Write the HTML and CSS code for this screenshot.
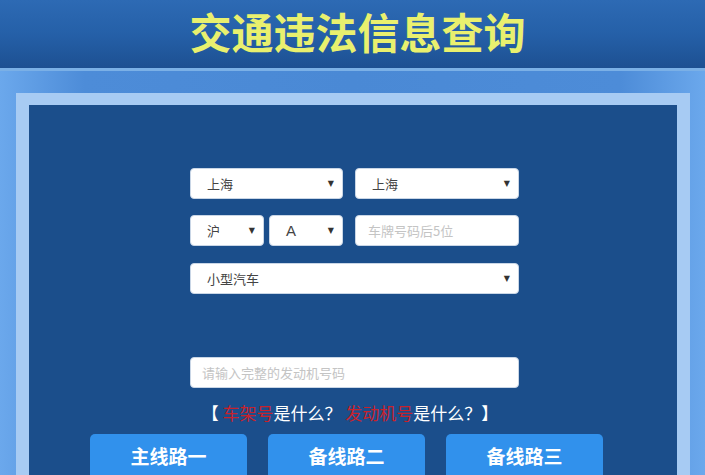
FILE: index.html
```html
<!DOCTYPE html>
<html lang="zh-CN">
<head>
<meta charset="utf-8">
<title>交通违法信息查询</title>
<link rel="stylesheet" href="styles.css">
</head>
<body>
<header class="top">
  <h1 class="title">交通违法信息查询</h1>
</header>
<div class="band">
  <div class="frame">
    <div class="panel">
      <div class="form">
        <div class="row">
          <div class="sel w153"><span>上海</span><i class="arr">▼</i></div>
          <div class="sel w164"><span>上海</span><i class="arr">▼</i></div>
        </div>
        <div class="row">
          <div class="pair">
            <div class="sel w74"><span>沪</span><i class="arr">▼</i></div>
            <div class="sel w74"><span class="latin">A</span><i class="arr">▼</i></div>
          </div>
          <div class="sel w164"><span class="ph">车牌号码后5位</span></div>
        </div>
        <div class="row">
          <div class="sel wfull"><span>小型汽车</span><i class="arr">▼</i></div>
        </div>
        <div class="row engine">
          <div class="sel wfull"><span class="ph ph2">请输入完整的发动机号码</span></div>
        </div>
      </div>
      <p class="hint">【 <span class="red">车架号</span>是什么？ <span class="red">发动机号</span>是什么？】</p>
      <div class="btns">
        <div class="btn">主线路一</div>
        <div class="btn">备线路二</div>
        <div class="btn">备线路三</div>
      </div>
    </div>
  </div>
</div>
</body>
</html>
```

FILE: styles.css
```css
html, body {
  margin: 0;
  padding: 0;
  height: 100%;
  overflow: hidden;
}
body {
  font-family: "Noto Sans CJK SC", "Noto Sans", sans-serif;
  background: #4a8bd6;
}
.top {
  height: 68px;
  background: linear-gradient(to bottom, #2d6ab4 0%, #2560a8 50%, #1d5092 100%);
  border-bottom: 3px solid #7bb0e6;
  display: flex;
  justify-content: center;
  align-items: center;
}
.title {
  margin: 0;
  font-size: 42px;
  font-weight: 700;
  color: #e9f06e;
  line-height: 1;
  margin-top: -6px;
  margin-left: 10px;
}
.band {
  height: 404px;
  background: linear-gradient(to right, #6ba8ec 0%, #4d8cd8 12%, #4a89d5 50%, #4d8cd8 88%, #6ba8ec 100%);
  padding: 22px 15px 0 16px;
  box-sizing: border-box;
}
.frame {
  border-style: solid;
  border-color: #a7cbf3;
  border-width: 12px 13px 0 13px;
  height: 370px;
}
.panel {
  background: #1b4e8b;
  height: 100%;
  padding-top: 63px;
  box-sizing: border-box;
  overflow: hidden;
}
.form {
  width: 329px;
  margin-left: 161px;
  display: flex;
  flex-direction: column;
  gap: 16px;
}
.row {
  display: flex;
  justify-content: space-between;
  height: 31px;
}
.row:nth-child(3) {
  margin-top: 1px;
}
.row.engine {
  margin-top: 47px;
}
.pair {
  display: flex;
  gap: 5px;
}
.sel {
  box-sizing: border-box;
  height: 31px;
  background: #fff;
  border: 1px solid #c9d6e6;
  border-radius: 4px;
  display: flex;
  align-items: center;
  justify-content: space-between;
  padding: 0 8px 0 16px;
  font-size: 13px;
  color: #444;
}
.w153 { width: 153px; }
.w164 { width: 164px; }
.w74 { width: 74px; }
.wfull { width: 329px; }
.sel .latin {
  font-family: "Liberation Sans", Arial, sans-serif;
  font-size: 15px;
}
.arr {
  font-style: normal;
  font-size: 8px;
  color: #333;
  font-family: "DejaVu Sans", sans-serif;
}
.ph {
  color: #c4c4c4;
  margin-left: -4px;
}
.ph2 {
  margin-left: -5px;
}
.hint {
  margin: 14px 0 0 0;
  height: 22px;
  line-height: 22px;
  font-size: 17px;
  color: #ffffff;
  text-align: center;
  padding-right: 6px;
}
.red {
  color: #c8222c;
}
.btns {
  display: flex;
  gap: 21px;
  margin-top: 10px;
  margin-left: 61px;
}
.btn {
  width: 157px;
  height: 42px;
  background: #3191ec;
  border-radius: 5px 5px 0 0;
  color: #fff;
  font-size: 19px;
  font-weight: 700;
  text-align: center;
  line-height: 44px;
}
```
